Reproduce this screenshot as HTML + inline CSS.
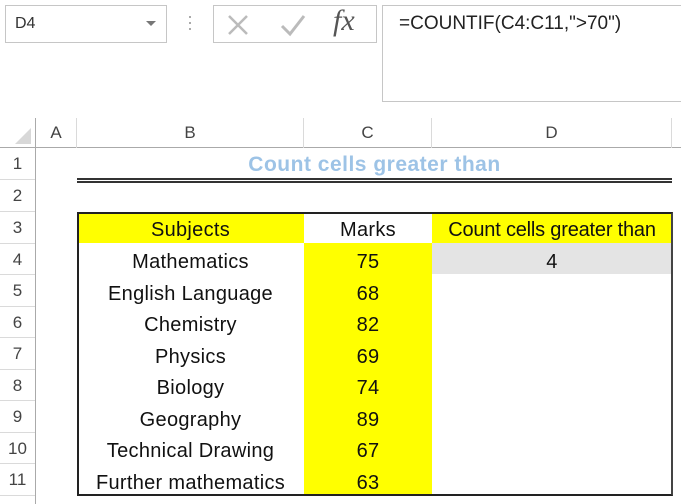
<!DOCTYPE html>
<html><head><style>
*{margin:0;padding:0;box-sizing:border-box}
body{width:681px;height:504px;background:#fff;position:relative;overflow:hidden;font-family:"Liberation Sans",Arial,sans-serif}
.a{position:absolute}
.t{position:absolute;text-align:center;font-size:20px;color:#111;white-space:nowrap;letter-spacing:0.3px;margin-top:2px}
.rh{position:absolute;left:0;width:35px;text-align:center;font-size:17px;color:#444;border-bottom:1px solid #dadada}
.ch{position:absolute;top:118px;height:30px;line-height:30px;text-align:center;font-size:17px;color:#444;border-right:1px solid #dadada}
</style></head><body>
<div class="a" style="left:5px;top:5px;width:162px;height:38px;border:1px solid #c6c6c6;font-size:16px;line-height:36px;padding-left:9px;color:#333">D4</div>
<div class="a" style="left:146px;top:21px;width:0;height:0;border-left:5px solid transparent;border-right:5px solid transparent;border-top:5px solid #777"></div>
<div class="a" style="left:189px;top:16px;width:2px;height:2px;background:#aaa;box-shadow:0 6px #aaa,0 12px #aaa"></div>
<div class="a" style="left:213px;top:5px;width:164px;height:38px;border:1px solid #c6c6c6"></div>
<svg class="a" style="left:225px;top:12px" width="40" height="26"><path d="M4 4 L22 22 M22 4 L4 22" stroke="#bbb" stroke-width="2.5"/></svg>
<svg class="a" style="left:278px;top:12px" width="40" height="26"><path d="M4 14 L12 22 L26 4" stroke="#bbb" stroke-width="3" fill="none"/></svg>
<div class="a" style="left:333px;top:4px;font-family:'Liberation Serif',serif;font-style:italic;font-size:30px;color:#555">fx</div>
<div class="a" style="left:382px;top:5px;width:310px;height:97px;border:1px solid #c6c6c6"></div>
<div class="a" style="left:399px;top:13px;font-size:19px;color:#222">=COUNTIF(C4:C11,"&gt;70")</div>

<div class="a" style="left:0;top:118px;width:681px;height:30px;border-bottom:1px solid #aaa"></div>
<svg class="a" style="left:13px;top:126px" width="20" height="20"><path d="M18 2 L18 18 L2 18 Z" fill="#d8d8d8"/></svg>
<div class="a" style="left:35px;top:118px;width:1px;height:386px;background:#aaa"></div>
<div class="ch" style="left:36px;width:41px">A</div>
<div class="ch" style="left:77px;width:227px">B</div>
<div class="ch" style="left:304px;width:128px">C</div>
<div class="ch" style="left:432px;width:240px">D</div>

<div class="rh" style="top:148px;height:32px;line-height:32px">1</div>
<div class="rh" style="top:180px;height:32px;line-height:32px">2</div>
<div class="rh" style="top:212px;height:32px;line-height:32px">3</div>
<div class="rh" style="top:244px;height:31px;line-height:31px">4</div>
<div class="rh" style="top:275px;height:32px;line-height:32px">5</div>
<div class="rh" style="top:307px;height:31px;line-height:31px">6</div>
<div class="rh" style="top:338px;height:32px;line-height:32px">7</div>
<div class="rh" style="top:370px;height:31px;line-height:31px">8</div>
<div class="rh" style="top:401px;height:32px;line-height:32px">9</div>
<div class="rh" style="top:433px;height:31px;line-height:31px">10</div>
<div class="rh" style="top:464px;height:32px;line-height:32px">11</div>

<div class="t" style="left:77px;width:595px;top:151px;color:#9dc3e6;font-weight:bold;font-size:21px;letter-spacing:0.5px">Count cells greater than</div>
<div class="a" style="left:77px;top:178px;width:595px;height:5px;border-top:2px solid #333;border-bottom:2px solid #333"></div>

<div class="a" style="left:77px;top:212px;width:227px;height:31px;background:#ff0"></div>
<div class="a" style="left:432px;top:212px;width:240px;height:31px;background:#ff0"></div>
<div class="a" style="left:304px;top:243px;width:128px;height:252px;background:#ff0"></div>
<div class="a" style="left:432px;top:243px;width:240px;height:31px;background:#e4e4e4"></div>
<div class="a" style="left:77px;top:212px;width:596px;height:284px;border:2px solid #222;border-right-color:#444"></div>

<div class="t" style="left:77px;width:227px;top:217px">Subjects</div>
<div class="t" style="left:304px;width:128px;top:217px">Marks</div>
<div class="t" style="left:432px;width:240px;top:217px;letter-spacing:-0.2px">Count cells greater than</div>
<div class="t" style="left:432px;width:240px;top:249px">4</div>

<div class="t" style="left:77px;width:227px;top:249px">Mathematics</div>
<div class="t" style="left:77px;width:227px;top:281px">English Language</div>
<div class="t" style="left:77px;width:227px;top:312px">Chemistry</div>
<div class="t" style="left:77px;width:227px;top:344px">Physics</div>
<div class="t" style="left:77px;width:227px;top:375px">Biology</div>
<div class="t" style="left:77px;width:227px;top:407px">Geography</div>
<div class="t" style="left:77px;width:227px;top:438px">Technical Drawing</div>
<div class="t" style="left:77px;width:227px;top:470px">Further mathematics</div>

<div class="t" style="left:304px;width:128px;top:249px">75</div>
<div class="t" style="left:304px;width:128px;top:281px">68</div>
<div class="t" style="left:304px;width:128px;top:312px">82</div>
<div class="t" style="left:304px;width:128px;top:344px">69</div>
<div class="t" style="left:304px;width:128px;top:375px">74</div>
<div class="t" style="left:304px;width:128px;top:407px">89</div>
<div class="t" style="left:304px;width:128px;top:438px">67</div>
<div class="t" style="left:304px;width:128px;top:470px">63</div>
</body></html>
